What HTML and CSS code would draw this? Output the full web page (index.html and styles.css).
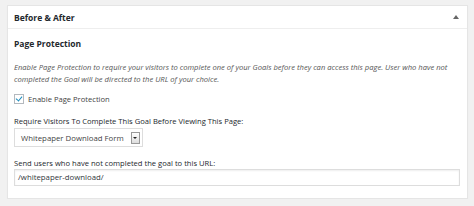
FILE: index.html
```html
<!DOCTYPE html>
<html lang="en">
<head>
    <meta charset="UTF-8">
    <title>Before &amp; After</title>
    <link rel="stylesheet" href="styles.css">
</head>
<body>

    <div class="postbox">
        <!-- Box header -->
        <div class="postbox-header">
            <h2>Before &amp; After</h2>
            <span class="toggle-arrow"></span>
        </div>

        <div class="inside">
            <h3>Page Protection</h3>

            <p class="description">Enable Page Protection to require your visitors to complete one of your Goals before they can access this page. User who have not completed the Goal will be directed to the URL of your choice.</p>

            <label class="check-row">
                <span class="checkbox checked"></span>
                Enable Page Protection
            </label>

            <label class="field-label" for="goal">Require Visitors To Complete This Goal Before Viewing This Page:</label>
            <div class="select-box" id="goal">
                <span>Whitepaper Download Form</span>
                <span class="select-arrow"></span>
            </div>

            <label class="field-label second" for="url">Send users who have not completed the goal to this URL:</label>
            <div class="text-input" id="url">/whitepaper-download/</div>
        </div>
    </div>

</body>
</html>
```

FILE: styles.css
```css
/* WP admin metabox */
body {
    font-family: 'Open Sans', sans-serif;
    background-color: #f1f1f1;
    color: #444;
    margin: 0;
    padding: 5px 6px 0 7px;
}

.postbox {
    background: #fff;
    border: 1px solid #e5e5e5;
    box-shadow: 0 1px 1px rgba(0, 0, 0, 0.04);
    height: 194px;
    box-sizing: border-box;
}

.postbox-header {
    display: flex;
    align-items: center;
    justify-content: space-between;
    height: 22px;
    padding: 0 8px 0 6px;
    border-bottom: 1px solid #eee;
}

.postbox-header h2 {
    margin: 0;
    font-size: 8.5px;
    font-weight: 700;
    color: #23282d;
}

.toggle-arrow {
    width: 0;
    height: 0;
    border-left: 3px solid transparent;
    border-right: 3px solid transparent;
    border-bottom: 4px solid #666;
}

.inside {
    padding: 9px 7px 0 6px;
}

.inside h3 {
    margin: 0 0 12px;
    font-size: 8.5px;
    font-weight: 700;
    color: #23282d;
}

.description {
    margin: 0 0 9px;
    font-size: 7.6px;
    font-style: italic;
    line-height: 12px;
    color: #555;
}

.check-row {
    display: flex;
    align-items: center;
    gap: 4px;
    font-size: 7.6px;
    color: #444;
}

.checkbox {
    width: 8px;
    height: 8px;
    border: 1px solid #b4b9be;
    background: #fff;
    position: relative;
}

.checkbox.checked::after {
    content: "";
    position: absolute;
    left: 2px;
    top: 0;
    width: 3px;
    height: 5px;
    border-right: 1.5px solid #1e8cbe;
    border-bottom: 1.5px solid #1e8cbe;
    transform: rotate(40deg);
}

.field-label {
    display: block;
    margin-top: 12px;
    font-size: 7.6px;
    color: #23282d;
}

.field-label.second {
    margin-top: 11px;
}

.select-box {
    display: flex;
    align-items: center;
    justify-content: space-between;
    width: 129px;
    height: 19px;
    margin-top: 2px;
    padding: 0 2px 0 6px;
    box-sizing: border-box;
    border: 1px solid #ddd;
    font-size: 7.8px;
    color: #444;
}

.select-arrow {
    width: 7px;
    height: 10px;
    border: 1px solid #999;
    background: linear-gradient(#fff, #ddd);
    position: relative;
}

.select-arrow::after {
    content: "";
    position: absolute;
    left: 1px;
    top: 4px;
    border-left: 2.5px solid transparent;
    border-right: 2.5px solid transparent;
    border-top: 2.5px solid #222;
}

.text-input {
    height: 15px;
    margin-top: 1px;
    padding: 0 3px;
    border: 1px solid #ddd;
    box-shadow: inset 0 1px 2px rgba(0, 0, 0, 0.07);
    font-size: 7.8px;
    line-height: 15px;
    color: #32373c;
}
```
